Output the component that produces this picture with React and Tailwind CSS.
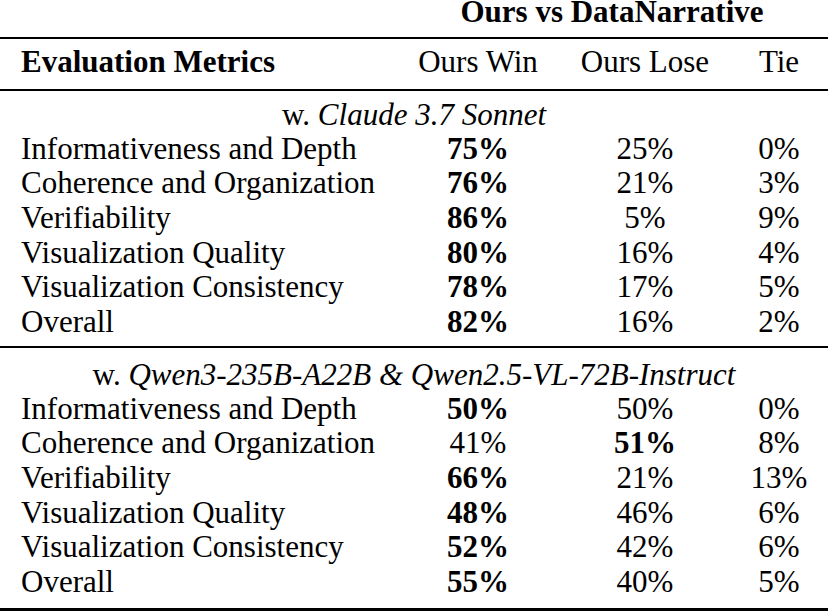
import React from "react";

const group1 = [
  ["Informativeness and Depth", "75%", "25%", "0%", 1],
  ["Coherence and Organization", "76%", "21%", "3%", 1],
  ["Verifiability", "86%", "5%", "9%", 1],
  ["Visualization Quality", "80%", "16%", "4%", 1],
  ["Visualization Consistency", "78%", "17%", "5%", 1],
  ["Overall", "82%", "16%", "2%", 1],
];

const group2 = [
  ["Informativeness and Depth", "50%", "50%", "0%", 1],
  ["Coherence and Organization", "41%", "51%", "8%", 2],
  ["Verifiability", "66%", "21%", "13%", 1],
  ["Visualization Quality", "48%", "46%", "6%", 1],
  ["Visualization Consistency", "52%", "42%", "6%", 1],
  ["Overall", "55%", "40%", "5%", 1],
];

function Row({ r }) {
  const [name, a, b, c, bold] = r;
  return (
    <div className="flex h-[34.7px] leading-[34.7px] whitespace-nowrap">
      <div className="w-[418px] pl-[21px]">{name}</div>
      <div className={"w-[120px] flex justify-center " + (bold === 1 ? "font-bold" : "")}>{a}</div>
      <div className={"w-[214px] flex justify-center " + (bold === 2 ? "font-bold" : "")}>{b}</div>
      <div className="w-[54px] flex justify-center">{c}</div>
    </div>
  );
}

export default function App() {
  return (
    <div
      className="w-[832px] h-[612px] overflow-hidden bg-white text-black text-[31px]"
      style={{ fontFamily: '"Liberation Serif", "Times New Roman", serif' }}
    >
      <div className="w-[828px]">
        <div className="flex h-[24px] leading-[24px] whitespace-nowrap">
          <div className="w-[418px]" />
          <div className="w-[388px] flex justify-center font-bold">Ours vs DataNarrative</div>
        </div>
        <div className="mt-[13px] h-[2px] bg-black" />
        <div className="mt-[5px] flex h-[35px] leading-[35px] whitespace-nowrap">
          <div className="w-[418px] pl-[21px] font-bold">Evaluation Metrics</div>
          <div className="w-[120px] flex justify-center">Ours Win</div>
          <div className="w-[214px] flex justify-center">Ours Lose</div>
          <div className="w-[54px] flex justify-center">Tie</div>
        </div>
        <div className="mt-[10px] h-[1.5px] bg-black" />
        <div className="mt-[7px] h-[34px] leading-[34px] flex justify-center whitespace-nowrap">
          <span>
            w. <i>Claude 3.7 Sonnet</i>
          </span>
        </div>
        {group1.map((r, i) => (
          <Row key={i} r={r} />
        ))}
        <div className="mt-[6px] h-[2px] bg-black" />
        <div className="mt-[10px] h-[34px] leading-[34px] flex justify-center whitespace-nowrap">
          <span>
            w. <i>Qwen3-235B-A22B &amp; Qwen2.5-VL-72B-Instruct</i>
          </span>
        </div>
        {group2.map((r, i) => (
          <Row key={i} r={r} />
        ))}
        <div className="mt-[8px] h-[3px] bg-black" />
      </div>
    </div>
  );
}
